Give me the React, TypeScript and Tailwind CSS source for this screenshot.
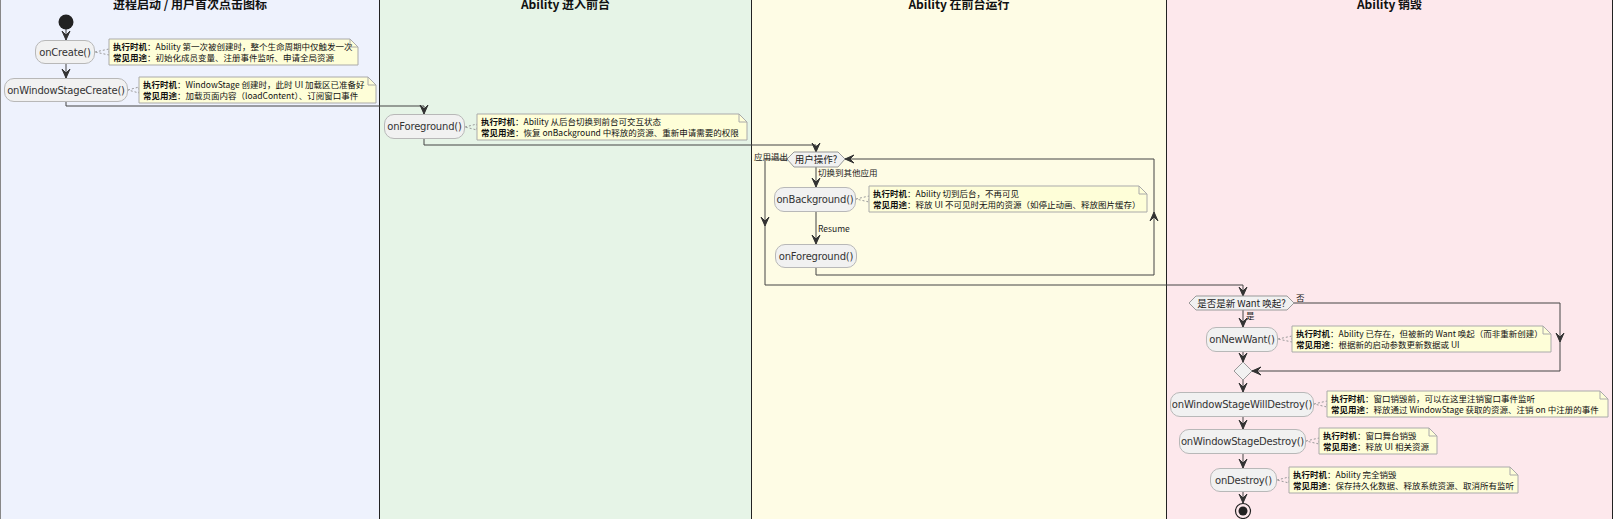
import React from "react";

const F = { fontFamily: '"Noto Sans CJK SC", "Noto Sans", sans-serif' };

type NodeP = { x: number; y: number; w: number; h: number; t: string };
const nodes: NodeP[] = [
  { x: 35, y: 40, w: 60, h: 24, t: "onCreate()" },
  { x: 4, y: 78, w: 124, h: 24, t: "onWindowStageCreate()" },
  { x: 384, y: 114, w: 81, h: 25, t: "onForeground()" },
  { x: 774, y: 187, w: 82, h: 25, t: "onBackground()" },
  { x: 775, y: 244, w: 82, h: 24, t: "onForeground()" },
  { x: 1206, y: 327, w: 72, h: 25, t: "onNewWant()" },
  { x: 1170, y: 392, w: 144, h: 25, t: "onWindowStageWillDestroy()" },
  { x: 1179, y: 429, w: 127, h: 25, t: "onWindowStageDestroy()" },
  { x: 1210, y: 468, w: 67, h: 24, t: "onDestroy()" },
];

type NoteP = { x: number; y: number; w: number; h: number; a: string; b: string; nx: number };
const notes: NoteP[] = [
  { x: 109, y: 39, w: 249, h: 26, nx: 95, a: "Ability 第一次被创建时，整个生命周期中仅触发一次", b: "初始化成员变量、注册事件监听、申请全局资源" },
  { x: 139, y: 77, w: 237, h: 26, nx: 128, a: "WindowStage 创建时，此时 UI 加载区已准备好", b: "加载页面内容（loadContent）、订阅窗口事件" },
  { x: 477, y: 114, w: 270, h: 26, nx: 465, a: "Ability 从后台切换到前台可交互状态", b: "恢复 onBackground 中释放的资源、重新申请需要的权限" },
  { x: 869, y: 186, w: 278, h: 26, nx: 856, a: "Ability 切到后台，不再可见", b: "释放 UI 不可见时无用的资源（如停止动画、释放图片缓存）" },
  { x: 1292, y: 326, w: 259, h: 26, nx: 1278, a: "Ability 已存在，但被新的 Want 唤起（而非重新创建）", b: "根据新的启动参数更新数据或 UI" },
  { x: 1327, y: 391, w: 281, h: 26, nx: 1314, a: "窗口销毁前，可以在这里注销窗口事件监听", b: "释放通过 WindowStage 获取的资源、注销 on 中注册的事件" },
  { x: 1319, y: 428, w: 118, h: 26, nx: 1306, a: "窗口舞台销毁", b: "释放 UI 相关资源" },
  { x: 1289, y: 467, w: 229, h: 26, nx: 1277, a: "Ability 完全销毁", b: "保存持久化数据、释放系统资源、取消所有监听" },
];

const lanes = [
  { w: 380, bg: "bg-[#eef2fd]", t: "进程启动 / 用户首次点击图标" },
  { w: 372, bg: "bg-[#e6f4e7]", t: "Ability 进入前台" },
  { w: 415, bg: "bg-[#fefce5]", t: "Ability 在前台运行" },
  { w: 446, bg: "bg-[#fde8ec]", t: "Ability 销毁" },
];

function Arrow({ x, y, dir }: { x: number; y: number; dir: "d" | "u" | "l" }) {
  let pts = "";
  if (dir === "d") pts = `${x - 4},${y - 9} ${x},${y} ${x + 4},${y - 9} ${x},${y - 5}`;
  if (dir === "u") pts = `${x - 4},${y + 9} ${x},${y} ${x + 4},${y + 9} ${x},${y + 5}`;
  if (dir === "l") pts = `${x + 9},${y - 4} ${x},${y} ${x + 9},${y + 4} ${x + 5},${y}`;
  return <polygon points={pts} fill="#333" stroke="#333" strokeWidth={1} />;
}

export default function App() {
  const line = (pts: string, k: string) => (
    <polyline key={k} points={pts} fill="none" stroke="#444" strokeWidth={1} />
  );
  return (
    <div className="relative w-[1613px] h-[519px] overflow-hidden bg-white" style={F}>
      <div className="flex h-full border-l border-[#888]">
        {lanes.map((l, i) => (
          <div
            key={i}
            className={`${l.bg} h-full border-r border-[#222] flex justify-center`}
            style={{ width: l.w - (i === 0 ? 1 : 0) }}
          >
            <div className="text-[12px] font-bold text-[#111] -mt-[4px] leading-[16px]">{l.t}</div>
          </div>
        ))}
      </div>

      <svg className="absolute left-0 top-0" width={1613} height={519}>
        {line("66,29 66,40", "a")}
        <Arrow x={66} y={40} dir="d" />
        {line("66,64 66,78", "b")}
        <Arrow x={66} y={78} dir="d" />
        {line("66,102 66,106 424,106 424,114", "c")}
        <Arrow x={424} y={114} dir="d" />
        {line("424,139 424,145 816,145 816,152", "d")}
        <Arrow x={816} y={152} dir="d" />
        {line("816,167 816,187", "e")}
        <Arrow x={816} y={187} dir="d" />
        {line("816,212 816,244", "f")}
        <Arrow x={816} y={244} dir="d" />
        {line("816,268 816,275 1154,275 1154,159 845,159", "g")}
        <Arrow x={1154} y={212} dir="u" />
        <Arrow x={845} y={159} dir="l" />
        {line("787,159 765,159 765,285 1243,285 1243,296", "h")}
        <Arrow x={765} y={226} dir="d" />
        <Arrow x={1243} y={296} dir="d" />
        {line("1243,310 1243,327", "i")}
        <Arrow x={1243} y={327} dir="d" />
        {line("1294,303 1560,303 1560,371 1252,371", "j")}
        <Arrow x={1560} y={342} dir="d" />
        <Arrow x={1252} y={371} dir="l" />
        {line("1243,352 1243,362", "k")}
        <Arrow x={1243} y={362} dir="d" />
        {line("1243,380 1243,392", "l")}
        <Arrow x={1243} y={392} dir="d" />
        {line("1243,417 1243,429", "m")}
        <Arrow x={1243} y={429} dir="d" />
        {line("1243,454 1243,468", "n")}
        <Arrow x={1243} y={468} dir="d" />
        {line("1243,492 1243,503", "o")}
        <Arrow x={1243} y={503} dir="d" />

        <circle cx={66} cy={22} r={7.5} fill="#222" />
        <circle cx={1243} cy={511} r={7.5} fill="none" stroke="#222" strokeWidth={1.2} />
        <circle cx={1243} cy={511} r={4.5} fill="#222" />

        <polygon points="787,159 794,152 838,152 845,159 838,167 794,167" fill="#f1f1f1" stroke="#999" />
        <polygon points="1189,303 1196,296 1287,296 1294,303 1287,310 1196,310" fill="#f1f1f1" stroke="#999" />
        <polygon points="1243,362 1252,371 1243,380 1234,371" fill="#f1f1f1" stroke="#999" />

        {notes.map((n, i) => (
          <g key={i}>
            <polyline
              points={`${n.nx},${n.y + n.h / 2} ${n.x},${n.y + n.h / 2 - 3} ${n.x},${n.y + n.h / 2 + 3} ${n.nx},${n.y + n.h / 2}`}
              fill="none"
              stroke="#999"
              strokeDasharray="2,2"
            />
            <polygon
              points={`${n.x},${n.y} ${n.x + n.w - 8},${n.y} ${n.x + n.w},${n.y + 8} ${n.x + n.w},${n.y + n.h} ${n.x},${n.y + n.h}`}
              fill="#fefed8"
              stroke="#aaa"
            />
            <polyline
              points={`${n.x + n.w - 8},${n.y} ${n.x + n.w - 8},${n.y + 8} ${n.x + n.w},${n.y + 8}`}
              fill="none"
              stroke="#aaa"
            />
          </g>
        ))}
      </svg>

      {nodes.map((n, i) => (
        <div
          key={i}
          className="absolute flex items-center justify-center whitespace-nowrap rounded-[10px] border border-[#b8b8b8] bg-[#f1f1f1] text-[10px] text-[#333]"
          style={{ left: n.x, top: n.y, width: n.w, height: n.h, fontFamily: '"DejaVu Sans", sans-serif', letterSpacing: "-0.2px" }}
        >
          {n.t}
        </div>
      ))}

      {notes.map((n, i) => (
        <div
          key={i}
          className="absolute px-[4px] pt-[2px] text-[8.5px] leading-[11px] text-[#111] whitespace-nowrap"
          style={{ left: n.x, top: n.y }}
        >
          <div>
            <b>执行时机</b>：{n.a}
          </div>
          <div>
            <b>常见用途</b>：{n.b}
          </div>
        </div>
      ))}

      <div className="absolute left-[818px] top-[166px] text-[8.5px] text-[#222]">切换到其他应用</div>
      <div className="absolute left-[818px] top-[222px] text-[8.5px] text-[#222]">Resume</div>
      <div className="absolute left-[754px] top-[150px] text-[8.5px] text-[#222]">应用退出</div>
      <div className="absolute left-[1246px] top-[309px] text-[8.5px] text-[#222]">是</div>
      <div className="absolute left-[1296px] top-[291px] text-[8.5px] text-[#222]">否</div>
      <div className="absolute left-[790px] top-[152px] w-[52px] h-[15px] flex items-center justify-center whitespace-nowrap text-[9.5px] text-[#222]">用户操作?</div>
      <div className="absolute left-[1192px] top-[296px] w-[99px] h-[14px] flex items-center justify-center whitespace-nowrap text-[9.5px] text-[#222]">是否是新 Want 唤起?</div>
    </div>
  );
}
